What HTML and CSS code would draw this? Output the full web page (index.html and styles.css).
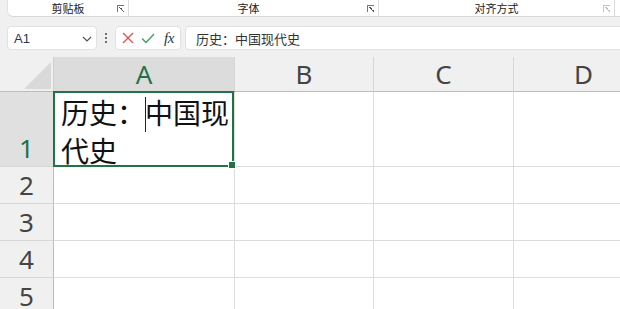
FILE: index.html
```html
<!DOCTYPE html>
<html lang="zh-CN">
<head>
<meta charset="utf-8">
<title>Excel</title>
<link rel="stylesheet" href="styles.css">
</head>
<body>
<div class="app">
  <div class="ribbon">
    <div class="group g1"><span class="glabel">剪贴板</span><span class="launcher"></span></div>
    <div class="group g2"><span class="glabel">字体</span><span class="launcher"></span></div>
    <div class="group g3"><span class="glabel">对齐方式</span><span class="launcher dim"></span></div>
  </div>

  <div class="fbar">
    <div class="namebox">
      <span class="nb-text">A1</span>
      <svg class="chev" width="10" height="6" viewBox="0 0 10 6"><path d="M1 1 L5 5 L9 1" fill="none" stroke="#555" stroke-width="1.2"/></svg>
    </div>
    <div class="kebab"><i></i><i></i><i></i></div>
    <div class="fbtns">
      <svg class="ico" width="12" height="12" viewBox="0 0 12 12"><path d="M1 1 L11 11 M11 1 L1 11" stroke="#e2504f" stroke-width="1.3" fill="none"/></svg>
      <svg class="ico" width="14" height="11" viewBox="0 0 14 11"><path d="M1 5.5 L5 9.5 L13 1" stroke="#3f9d62" stroke-width="1.3" fill="none"/></svg>
      <span class="fx">fx</span>
    </div>
    <div class="finput">历史：中国现代史</div>
  </div>

  <div class="sheet">
    <div class="corner"><span class="tri"></span></div>
    <div class="ch sel">A</div>
    <div class="ch">B</div>
    <div class="ch">C</div>
    <div class="ch">D</div>

    <div class="rh sel">1</div>
    <div class="cell a1">历史：<span class="caret"></span>中国现代史</div>
    <div class="cell"></div>
    <div class="cell"></div>
    <div class="cell"></div>

    <div class="rh">2</div>
    <div class="cell"></div><div class="cell"></div><div class="cell"></div><div class="cell"></div>
    <div class="rh">3</div>
    <div class="cell"></div><div class="cell"></div><div class="cell"></div><div class="cell"></div>
    <div class="rh">4</div>
    <div class="cell"></div><div class="cell"></div><div class="cell"></div><div class="cell"></div>
    <div class="rh">5</div>
    <div class="cell"></div><div class="cell"></div><div class="cell"></div><div class="cell"></div>
  </div>
</div>
</body>
</html>
```

FILE: styles.css
```css
* { box-sizing: border-box; }
html, body { margin: 0; padding: 0; }
body {
  width: 620px;
  height: 309px;
  overflow: hidden;
  background: #f0f0f0;
  font-family: "Noto Sans", "Noto Sans CJK SC", sans-serif;
}
.app { width: 620px; height: 309px; overflow: hidden; }

/* ribbon */
.ribbon {
  display: flex;
  height: 17px;
  margin-left: 7px;
  width: 640px;
  background: #fff;
  border-bottom: 1px solid #d9d9d9;
  border-left: 1px solid #e2e2e2;
  border-radius: 0 0 0 6px;
}
.group {
  position: relative;
  display: flex;
  align-items: center;
  justify-content: center;
  height: 16px;
  border-right: 1px solid #dadada;
}
.g1 { width: 121px; }
.g2 { width: 250px; }
.g3 { width: 236px; }
.glabel {
  font-family: "Noto Sans CJK SC", sans-serif;
  font-size: 11px;
  line-height: 14px;
  color: #222;
  margin-top: -1px;
}
.g2 .glabel { margin-left: -10px; }
.launcher {
  position: absolute;
  right: 4px;
  top: 5px;
  width: 7px;
  height: 7px;
  border-top: 1px solid #777;
  border-left: 1px solid #777;
}
.launcher::after {
  content: "";
  position: absolute;
  left: 1px;
  top: 1px;
  width: 5px;
  height: 5px;
  background: linear-gradient(45deg, transparent 45%, #555 45%, #555 60%, transparent 60%);
}
.launcher.dim { border-color: #c4c4c4; }
.launcher.dim::after { background: linear-gradient(45deg, transparent 45%, #bdbdbd 45%, #bdbdbd 60%, transparent 60%); }

/* formula bar */
.fbar {
  display: flex;
  align-items: stretch;
  height: 24px;
  margin-top: 9px;
  padding-left: 7px;
}
.namebox, .fbtns, .finput {
  background: #fff;
  border: 1px solid #e1e1e1;
  border-radius: 4px;
}
.namebox {
  width: 90px;
  display: flex;
  align-items: center;
  justify-content: space-between;
  padding: 0 4px 0 6px;
}
.nb-text { font-family: "Liberation Sans", sans-serif; font-size: 13px; color: #283650; }
.chev { margin-top: 1px; }
.kebab {
  width: 18px;
  display: flex;
  flex-direction: column;
  align-items: center;
  justify-content: center;
  gap: 2px;
}
.kebab i { display: block; width: 2px; height: 2px; background: #444; border-radius: 1px; }
.fbtns {
  width: 66px;
  display: flex;
  align-items: center;
  gap: 7px;
  padding-left: 6px;
}
.fx {
  font-family: "Liberation Serif", serif;
  font-style: italic;
  font-size: 15px;
  color: #333;
  margin-left: 2px;
  letter-spacing: -0.5px;
}
.finput {
  flex: 1;
  margin-left: 4px;
  margin-right: -10px;
  display: flex;
  align-items: center;
  padding-left: 10px;
  font-family: "Noto Sans CJK SC", sans-serif;
  font-size: 13px;
  color: #333;
}

/* sheet */
.sheet {
  margin-top: 7px;
  display: grid;
  grid-template-columns: 54px 181px 139px 140px 140px;
  grid-template-rows: 35px 75px 37px 37px 37px 37px;
  width: 654px;
}
.corner {
  position: relative;
  background: #f0f0f0;
  border-right: 1px solid #cfcfcf;
  border-bottom: 1px solid #bdbdbd;
}
.tri {
  position: absolute;
  right: 2px;
  bottom: 2px;
  width: 0;
  height: 0;
  border-left: 27px solid transparent;
  border-bottom: 27px solid #d9d9d9;
}
.ch {
  display: flex;
  align-items: flex-end;
  justify-content: center;
  padding-bottom: 2px;
  background: #f0f0f0;
  border-right: 1px solid #d6d6d6;
  border-bottom: 1px solid #bdbdbd;
  font-size: 26px;
  line-height: 30px;
  color: #444;
}
.ch.sel { background: #dcdcdc; color: #217346; border-bottom-color: #217346; }
.rh {
  display: flex;
  align-items: flex-end;
  justify-content: center;
  padding-bottom: 3px;
  background: #f0f0f0;
  border-right: 1px solid #bdbdbd;
  border-bottom: 1px solid #d6d6d6;
  font-size: 26px;
  line-height: 30px;
  color: #444;
}
.rh.sel { background: #e0e0e0; color: #217346; border-right-color: #217346; }
.cell {
  background: #fff;
  border-right: 1px solid #dcdcdc;
  border-bottom: 1px solid #dcdcdc;
}
.a1 {
  position: relative;
  padding: 2px 0 0 7px;
  font-family: "Noto Sans CJK SC", sans-serif;
  font-size: 28px;
  line-height: 37px;
  color: #111;
  word-break: break-all;
}
.a1::before {
  content: "";
  position: absolute;
  top: -1px;
  left: -1px;
  right: 0;
  bottom: -1px;
  border: 2px solid #217346;
}
.a1::after {
  content: "";
  position: absolute;
  right: -2px;
  bottom: -3px;
  width: 6px;
  height: 6px;
  background: #217346;
  border: 1px solid #fff;
}
.caret {
  display: inline-block;
  width: 0;
  height: 35px;
  margin-right: -1px;
  border-left: 1px solid #222;
  vertical-align: -8px;
}
```
